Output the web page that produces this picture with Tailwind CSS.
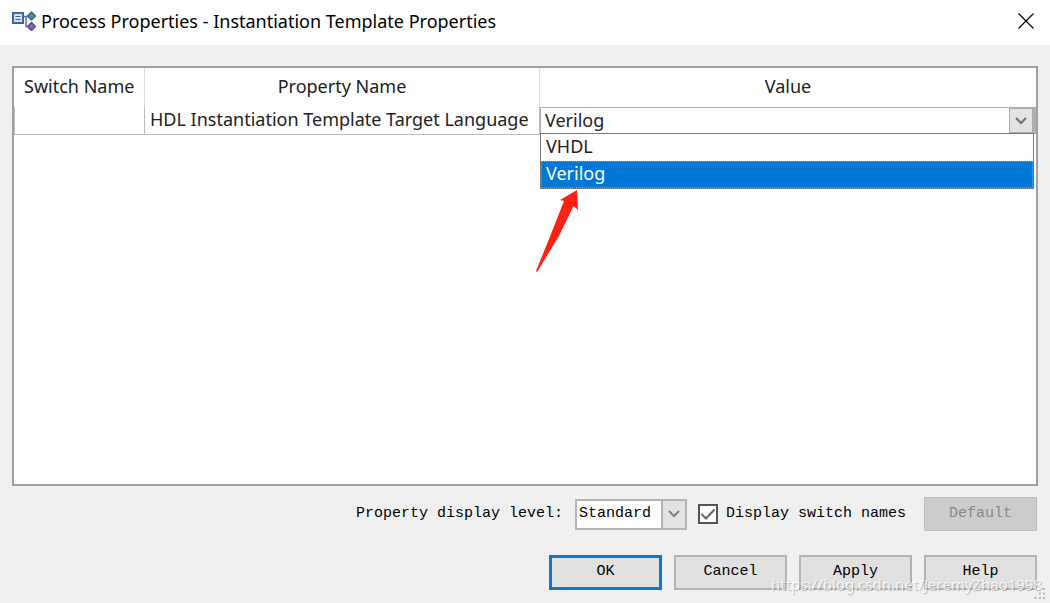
<!DOCTYPE html>
<html lang="en">

<head>
    <meta charset="UTF-8">
    <meta name="viewport" content="width=device-width, initial-scale=1.0">
    <script src="https://cdn.jsdelivr.net/npm/@tailwindcss/browser@4"></script>
    <title>Process Properties - Instantiation Template Properties</title>
</head>

<body class="min-h-screen flex flex-col relative overflow-x-hidden bg-[#f0f0f0] text-black font-['Noto_Sans',sans-serif]">

    <!-- title bar -->
    <header class="flex items-center h-[45px] pl-3 pr-4 pb-1 bg-white">
        <svg class="w-6 h-5 shrink-0" viewBox="0 0 24 20" fill="none" aria-hidden="true">
            <path d="M11 5.500h8M14 5.500v10h5" stroke="#5a6fb8" stroke-width="1.5" />
            <rect x="1" y="2" width="10" height="10" fill="#d3e3f8" stroke="#3f63b5" stroke-width="2" />
            <path d="M3.500 5.500h5M3.500 8.500h5" stroke="#3f63b5" />
            <path d="M19.500 1l4 4-4 4-4-4z" fill="#4b8f94" stroke="#45677f" stroke-width="1.500" stroke-linejoin="round" />
            <path d="M19.500 11.500l4 4-4 4-4-4z" fill="#7a68bd" stroke="#5a4a94" stroke-width="1.500" stroke-linejoin="round" />
        </svg>
        <h1 class="ml-[5px] text-[18px] leading-6 whitespace-nowrap">Process Properties - Instantiation Template Properties</h1>
        <button type="button" aria-label="Close" class="ml-auto">
            <svg class="w-4 h-4" viewBox="0 0 16 16" stroke="#000" stroke-width="1.2">
                <path d="M0.500 0.500l15 15M15.500 0.500l-15 15" />
            </svg>
        </button>
    </header>

    <main class="flex-1 flex flex-col px-3 pt-[21px] pb-[13px]">

        <!-- property grid -->
        <div class="flex-1 border-2 border-[#a0a0a4] bg-white text-[#222]">
            <table class="w-full table-fixed border-collapse text-[18px] leading-6">
                <colgroup>
                    <col class="w-[130px]">
                    <col class="w-[395px]">
                    <col>
                </colgroup>
                <thead>
                    <tr class="h-[39px]">
                        <th scope="col" class="p-0 pb-1 font-normal border-r border-[#dcdcdc]">Switch Name</th>
                        <th scope="col" class="p-0 pb-1 font-normal border-r border-[#dcdcdc]">Property Name</th>
                        <th scope="col" class="p-0 pb-1 font-normal">Value</th>
                    </tr>
                </thead>
                <tbody>
                    <tr class="h-[27px]">
                        <td class="p-0 border-x border-b border-[#bcbcbc]"></td>
                        <td class="p-0 pl-[5px] pb-0.5 border-r border-b border-[#bcbcbc] whitespace-nowrap">
                            <label for="language">HDL Instantiation Template Target Language</label>
                        </td>
                        <td class="p-0">
                            <div class="relative h-[27px] border border-r-3 border-[#adadb2]">
                                <select id="language" class="block w-full h-full pl-1 pb-0.5 appearance-none bg-white outline-none">
                                    <option>VHDL</option>
                                    <option selected>Verilog</option>
                                </select>
                                <span class="absolute right-0 inset-y-0 w-6 flex items-center justify-center border border-[#adadad] bg-[#e3e3e3] pointer-events-none">
                                    <svg class="w-3 h-2" viewBox="0 0 12 8" fill="none" stroke="#707070" stroke-width="2">
                                        <path d="M1 1l5 5 5-5" />
                                    </svg>
                                </span>
                                <ul role="listbox" aria-label="Language" class="absolute top-full -left-px -right-px border border-[#77777c] bg-white">
                                    <li role="option" class="h-[27px] pl-[5px]">VHDL</li>
                                    <li role="option" aria-selected="true" class="h-[27px] pl-1 border border-dotted border-[#d08a50] bg-[#0078d7] text-white leading-[22px]">Verilog</li>
                                </ul>
                                <svg class="absolute top-[82px] -left-[5px] w-[43px] h-[82px]" viewBox="0 0 43 82" fill="#ff2014" aria-hidden="true">
                                    <path d="M41 0l1 20-4.500-4L23 46 1 82 0 81 15 44 28 11l-4-1z" />
                                </svg>
                            </div>
                        </td>
                    </tr>
                </tbody>
            </table>
        </div>

        <!-- display options -->
        <div class="mt-[11px] pr-px flex items-center justify-end font-['Liberation_Mono',monospace] text-[15px]">
            <label for="level">Property display level:</label>
            <div class="relative ml-3 w-28 h-[31px] border-2 border-[#b4b4b4]">
                <select id="level" class="block w-full h-full pl-0.5 appearance-none bg-white outline-none">
                    <option>Standard</option>
                    <option>Advanced</option>
                </select>
                <span class="absolute right-0 inset-y-0 w-6 flex items-center justify-center border-l-2 border-[#b4b4b4] bg-[#e3e3e3] pointer-events-none">
                    <svg class="w-3 h-2" viewBox="0 0 12 8" fill="none" stroke="#808080" stroke-width="2">
                        <path d="M1 1l5 5 5-5" />
                    </svg>
                </span>
            </div>
            <label class="ml-[11px] flex items-center gap-2">
                <span class="relative w-5 h-5">
                    <input type="checkbox" checked class="peer block w-5 h-5 appearance-none border-2 border-[#555] bg-white">
                    <svg class="absolute inset-0 hidden peer-checked:block pointer-events-none" viewBox="0 0 20 20" fill="none" stroke="#666" stroke-width="2">
                        <path d="M3.500 10l4.500 4.500 8.500-9" />
                    </svg>
                </span>
                Display switch names
            </label>
            <button type="button" disabled class="ml-[18px] w-[113px] h-[34px] border border-[#bfbfbf] bg-[#cccccc] text-[#888]">Default</button>
        </div>

        <!-- dialog buttons -->
        <div class="mt-6 pr-px flex justify-end gap-3 font-['Liberation_Mono',monospace] text-[15px]">
            <button type="button" class="w-[113px] h-[35px] border-3 border-[#1078d0] bg-[#e1e1e1]">OK</button>
            <button type="button" class="w-[113px] h-[35px] border-2 border-[#b4b4b4] bg-[#e1e1e1]">Cancel</button>
            <button type="button" class="w-[113px] h-[35px] border-2 border-[#b4b4b4] bg-[#e1e1e1]">Apply</button>
            <button type="button" class="w-[113px] h-[35px] border-2 border-[#b4b4b4] bg-[#e1e1e1]">Help</button>
        </div>
    </main>

    <p class="absolute right-2 bottom-2 font-['Noto_Sans',sans-serif] text-[15px] leading-[22px] text-white/80 text-shadow-[1px_1px_1px_rgb(0_0_0/0.25)] pointer-events-none">https://blog.csdn.net/JeremyZhao1998</p>

    <!-- resize grip -->
    <svg class="absolute right-1 bottom-[3px] w-3 h-3" viewBox="0 0 12 12" fill="#b8b8b8" aria-hidden="true">
        <path d="M9 0h2v2h-2zM5 4.500h2v2h-2zM9 4.500h2v2h-2zM0.500 9h2v2h-2zM5 9h2v2h-2zM9 9h2v2h-2z" />
    </svg>
</body>

</html>
